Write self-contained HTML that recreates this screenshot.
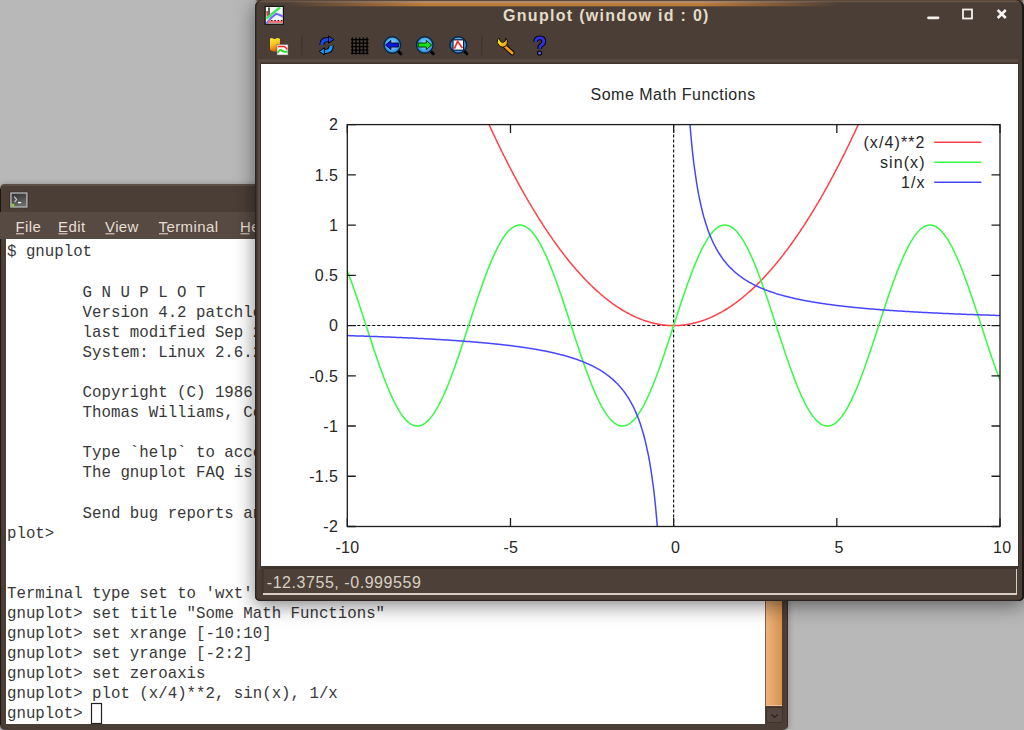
<!DOCTYPE html>
<html><head><meta charset="utf-8"><style>
*{box-sizing:border-box}
html,body{margin:0;padding:0}
body{width:1024px;height:730px;position:relative;overflow:hidden;background:#b8b8b8;font-family:"Liberation Sans",sans-serif}
.abs{position:absolute}
#term{left:0;top:183.6px;width:788.4px;height:546px;background:#4b3e36;border-radius:5px 5px 5px 5px;overflow:hidden;box-shadow:0 1px 6px rgba(0,0,0,.3)}
#tleft{left:0;top:5px;width:1.2px;height:536px;background:#1e1714}
#tright{left:786.6px;top:0;width:1.8px;height:545px;background:#3a2f29}
#tedge{left:0;top:0;width:788px;height:2px;background:#5e4f45}
#tmenu{left:0;top:28px;width:782px;height:27px;background:#574a42}
#tcontent{left:6px;top:55.6px;width:759.2px;height:485px;background:#fff}
#thumb{left:765.2px;top:55.6px;width:17.2px;height:467.2px;border-left:1px solid #8a6040;background:linear-gradient(#eab27c,#eab27c) 0 0/0 0 no-repeat,linear-gradient(90deg,#ebb47e,#d8924e)}
#thumbb{left:766px;top:521px;width:16.4px;height:1.8px;background:#f0c090}
#sbtn{left:765.6px;top:523.4px;width:17px;height:16.4px;background:#54463e;border:1px solid #3e332c;border-radius:1px 1px 3px 3px}
#gp{left:255.2px;top:0;width:768.8px;height:600.6px;background:#4b3e36;border-radius:7px 7px 5px 5px;box-shadow:0 4px 20px rgba(0,0,0,.5)}
#gpout{left:0;top:0;width:768.8px;height:600.6px;border-radius:7px 7px 5px 5px;box-shadow:inset 1.4px 0 0 #2c2420,inset -2px 0 0 #1e1814,inset 0 -1.2px 0 #2c2420}
#gptop{left:0;top:0;width:768.8px;height:8px;border-radius:7px 7px 0 0;background:linear-gradient(90deg,#4b3e36 4%,rgba(75,62,54,0) 22%,rgba(75,62,54,0) 58%,#4b3e36 76%),linear-gradient(#6a5038 0,#6a5038 1px,#c09a7a 1px,#b89070 2.8px,#c47e3c 3px,#b87838 5.5px,#4b3e36 7px)}
#gpedge{left:0;top:0;width:768.8px;height:3px;border-radius:7px 7px 0 0;background:linear-gradient(#5e4a3a 0,#5e4a3a 1px,rgba(140,112,90,.55) 1px,rgba(140,112,90,0) 3px)}
#gpband{left:2.8px;top:59.2px;width:760px;height:510px;border-top:3px solid #584a40;border-left:2.6px solid #584a40}
#gpwhite{left:5.8px;top:63.6px;width:756.9px;height:502.4px;background:#fff;box-shadow:0 0 0 0.6px #3a2f28}
#sdark{left:5.8px;top:566px;width:756.9px;height:3.4px;background:#3f342d}
#sleft{left:5.8px;top:566px;width:3px;height:28px;background:#43372f}
#status{left:8.8px;top:569.4px;width:751.6px;height:23.4px;background:#4d4038}
#statusline{left:8.2px;top:592.8px;width:753.9px;height:2px;background:#d8cdc2}
#statusr{left:760.4px;top:568.6px;width:1.7px;height:26.2px;background:#d8cdc2}
</style></head><body>
<div id="term" class="abs">
  <div id="tedge" class="abs"></div><div id="tleft" class="abs"></div><div id="tright" class="abs"></div>
  <div id="tmenu" class="abs"></div>
  <div id="tcontent" class="abs"></div>
  <div id="thumb" class="abs"></div>
  <div id="thumbb" class="abs"></div><div id="sbtn" class="abs"></div>
<svg class="abs" style="left:765.6px;top:523.4px" width="17" height="17"><path d="M5.6,7.6 L8.6,10.4 L11.6,7.6" stroke="#2a221e" stroke-width="1.4" fill="none"/></svg>
</div>
<svg class="abs" style="left:0;top:0" width="1024" height="730">
<g font-family="Liberation Mono" font-size="15.75" fill="#383838">
<text x="7.00" y="256.40">$ gnuplot</text>
<text x="82.60" y="296.58">G N U P L O T</text>
<text x="82.60" y="316.67">Version 4.2 patchlevel 2</text>
<text x="82.60" y="336.76">last modified Sep 2007</text>
<text x="82.60" y="356.85">System: Linux 2.6.24</text>
<text x="82.60" y="397.03">Copyright (C) 1986 - 199</text>
<text x="82.60" y="417.12">Thomas Williams, Colin K</text>
<text x="82.60" y="457.30">Type `help` to access th</text>
<text x="82.60" y="477.39">The gnuplot FAQ is avail</text>
<text x="82.60" y="517.57">Send bug reports and sug</text>
<text x="7.00" y="537.66">plot&gt;</text>
<text x="7.00" y="597.93">Terminal type set to &#x27;wxt&#x27;</text>
<text x="7.00" y="618.02">gnuplot&gt; set title &quot;Some Math Functions&quot;</text>
<text x="7.00" y="638.11">gnuplot&gt; set xrange [-10:10]</text>
<text x="7.00" y="658.20">gnuplot&gt; set yrange [-2:2]</text>
<text x="7.00" y="678.29">gnuplot&gt; set zeroaxis</text>
<text x="7.00" y="698.38">gnuplot&gt; plot (x/4)**2, sin(x), 1/x</text>
<text x="7.00" y="718.47">gnuplot&gt;</text>
</g>
<rect x="91.5" y="703.5" width="10" height="20" fill="none" stroke="#222" stroke-width="1.2"/>
<g font-family="Liberation Sans" font-size="15" fill="#e6ded4" letter-spacing="0.4">
<text x="15.5" y="231.7">File</text><text x="58" y="231.7">Edit</text><text x="105" y="231.7">View</text><text x="158.5" y="231.7">Terminal</text><text x="240" y="231.7">Help</text>
</g>
<g stroke="#e6ded4" stroke-width="1"><path d="M16,233.8h8 M58.5,233.8h9 M105.5,233.8h9 M159,233.8h9 M240.5,233.8h9"/></g>
<defs><linearGradient id="tig" x1="0" y1="0" x2="0.3" y2="1"><stop offset="0" stop-color="#2e2e2e"/><stop offset="1" stop-color="#6a6a6a"/></linearGradient></defs>
<rect x="9.6" y="191.8" width="18.6" height="16.4" fill="#2a2420"/>
<rect x="10.9" y="193" width="16" height="14" fill="url(#tig)" stroke="#b4b4b4" stroke-width="1.4"/>
<path d="M14.2,196.5 L16.6,199.6 L14.6,202.2" stroke="#c8c8c8" stroke-width="1.2" fill="none"/><path d="M18,202.6h3.2" stroke="#eee" stroke-width="1.4"/><rect x="11.3" y="203.8" width="3" height="2.8" fill="#8ad040"/>
</svg>
<div id="gp" class="abs">
  <div id="gptop" class="abs"></div><div id="gpedge" class="abs"></div>
  <div id="gpband" class="abs"></div><div id="gpwhite" class="abs"></div>
  <div id="sdark" class="abs"></div><div id="sleft" class="abs"></div><div id="status" class="abs"></div><div id="statusr" class="abs"></div>
  <div id="statusline" class="abs"></div><div id="gpout" class="abs"></div>
</div>
<svg class="abs" style="left:0;top:0" width="1024" height="730">
<text x="503" y="21.3" font-family="Liberation Sans" font-size="16" font-weight="bold" fill="#e4dcc8" letter-spacing="1.3">Gnuplot (window id : 0)</text>
<text x="266.8" y="587.8" font-family="Liberation Sans" font-size="16" fill="#d9d0c4" letter-spacing="0.55">-12.3755, -0.999559</text>
</svg>
<svg class="abs" style="left:0;top:0" width="1024" height="64">
<defs>
<linearGradient id="fold" x1="0" y1="0" x2="0.3" y2="1"><stop offset="0" stop-color="#fff23a"/><stop offset="0.55" stop-color="#f7c21a"/><stop offset="1" stop-color="#e5600e"/></linearGradient>
<radialGradient id="mag" cx="0.5" cy="0.45" r="0.55"><stop offset="0" stop-color="#b0e4ff"/><stop offset="0.6" stop-color="#50b0f0"/><stop offset="1" stop-color="#2878c8"/></radialGradient>
<linearGradient id="wr" x1="0" y1="0" x2="1" y2="1"><stop offset="0" stop-color="#f8f040"/><stop offset="0.45" stop-color="#f5d020"/><stop offset="1" stop-color="#f08a10"/></linearGradient>
</defs>
<!-- window icon -->
<rect x="264.5" y="5.8" width="19.5" height="19" fill="#141414"/>
<rect x="265.8" y="7" width="17" height="16.6" fill="#f6f4f4"/>
<path d="M269,7.5 V16" stroke="#2a2a2a" stroke-width="1.5"/>
<path d="M267,11 L267.5,16.5" stroke="#d84848" stroke-width="1.8"/>
<path d="M266.3,18.5 L280,7.5" stroke="#40e860" stroke-width="2.4"/>
<path d="M266.5,23.5 Q271,17 276,13.8 Q279,14.5 283,16.5" stroke="#6a6af8" stroke-width="2" fill="none"/>
<path d="M268,21.8 h15" stroke="#f06868" stroke-width="2.2"/>
<path d="M271,20.5 h12" stroke="#202020" stroke-width="1" stroke-dasharray="1.5,1.8"/>
<!-- open icon -->
<path d="M270,39 q1.5,-1.8 3,-0.5 q1.5,1 3,0 q2,-1.2 4,0.5 V50 q-2,1.5 -4.5,1.5 h-1 q-3,0 -4.5,-2 Z" fill="url(#fold)"/>
<rect x="277" y="44.5" width="11" height="10.5" fill="#fdfdfd" stroke="#6a6a6a" stroke-width="0.6"/>
<path d="M278,46.5 h5 q3,0 4,3" stroke="#f22" stroke-width="1.5" fill="none"/>
<path d="M278,53 q1.5,-4.5 3.5,-2.5 q2,1.8 6,1" stroke="#2d2" stroke-width="1.8" fill="none"/>
<path d="M301.8,35.5 V55.5" stroke="#3e322c" stroke-width="1.2"/>
<!-- refresh -->
<g fill="none">
<path d="M321.8,45 Q321.8,39.6 327.5,39.6 H329.5" stroke="#000" stroke-width="5"/>
<path d="M331.2,45.8 Q331.2,51.4 325.5,51.4 H323.5" stroke="#000" stroke-width="5"/>
<path d="M321.8,45 Q321.8,39.6 327.5,39.6 H329.5" stroke="#1c48e0" stroke-width="3.2"/>
<path d="M331.2,45.8 Q331.2,51.4 325.5,51.4 H323.5" stroke="#1e94f2" stroke-width="3.2"/>
</g>
<path d="M328.6,36 L333.8,39.6 L328.6,43.2 Z" fill="#1c48e0" stroke="#000" stroke-width="1"/>
<path d="M324.4,47.8 L319.2,51.4 L324.4,55 Z" fill="#1e94f2" stroke="#000" stroke-width="1"/>
<!-- grid -->
<g stroke="#000" stroke-width="1.4">
<path d="M352.4,37.5 V54.5 M356,37.5 V54.5 M359.7,37.5 V54.5 M363.4,37.5 V54.5 M367,37.5 V54.5"/>
<path d="M351,39.6 H368.5 M351,43.1 H368.5 M351,46.6 H368.5 M351,50.1 H368.5 M351,53.4 H368.5"/>
</g>
<!-- magnifiers -->
<g>
<path d="M397.5,50.5 L400.8,53.8" stroke="#000" stroke-width="3" stroke-linecap="round"/>
<circle cx="392.3" cy="45" r="8.3" fill="url(#mag)" stroke="#0a2440" stroke-width="1.4"/>
<path d="M385.6,45 L390.8,40.4 V43 H398.4 V47 H390.8 V49.6 Z" fill="#0818d8" stroke="#000030" stroke-width="0.9"/>
<path d="M430,50.5 L433.3,53.8" stroke="#000" stroke-width="3" stroke-linecap="round"/>
<circle cx="424.8" cy="45" r="8.3" fill="url(#mag)" stroke="#0a2440" stroke-width="1.4"/>
<path d="M431.5,45 L426.3,40.4 V43 H418.2 V47 H426.3 V49.6 Z" fill="#14e414" stroke="#002800" stroke-width="0.9"/>
<path d="M463.5,50.5 L466.8,53.8" stroke="#000" stroke-width="3" stroke-linecap="round"/>
<circle cx="458.3" cy="45" r="8.3" fill="url(#mag)" stroke="#0a2440" stroke-width="1.4"/>
<rect x="453" y="39.8" width="10.6" height="10.4" fill="#fafafa" stroke="#0c2040" stroke-width="1.2"/>
<path d="M454.4,48.6 L457.6,41.4 L462.4,48" stroke="#ee3030" stroke-width="1.7" fill="none"/>
</g>
<path d="M481.8,35.5 V55.5" stroke="#3e322c" stroke-width="1.2"/>
<!-- wrench -->
<path d="M504,45.5 L512.2,53" stroke="#000" stroke-width="4.6" stroke-linecap="round"/>
<path d="M504,45.5 L512.2,53" stroke="#f29a12" stroke-width="2.8" stroke-linecap="round"/>
<path d="M497.2,42.5 Q497,39.5 499.2,38 L500.3,41.2 L502.5,42.6 L505.2,41.2 L505.6,38 Q508.3,40.5 507.2,44 Q506,47.2 502.5,47.2 Q499,47 497.2,42.5 Z" fill="url(#wr)" stroke="#161000" stroke-width="1"/>
<!-- help -->
<path d="M535.6,42 Q535.6,37.8 539.8,37.8 Q543.8,37.8 543.8,41.4 Q543.8,43.6 541.2,45.1 Q539.6,46.1 539.6,48.8" stroke="#000" stroke-width="4.8" fill="none"/>
<path d="M535.6,42 Q535.6,37.8 539.8,37.8 Q543.8,37.8 543.8,41.4 Q543.8,43.6 541.2,45.1 Q539.6,46.1 539.6,48.8" stroke="#3030e0" stroke-width="2.8" fill="none"/>
<circle cx="539.6" cy="53" r="2.6" fill="#000"/>
<circle cx="539.6" cy="53" r="1.5" fill="#6060f0"/>
<!-- window buttons -->
<path d="M928.5,17.8 H938" stroke="#f4f0ea" stroke-width="2.8" stroke-linecap="round"/>
<rect x="963" y="9.5" width="9" height="9" fill="none" stroke="#f4f0ea" stroke-width="1.8"/>
<path d="M997.7,10 L1005.8,18 M1005.8,10 L997.7,18" stroke="#f8f6f2" stroke-width="2.5"/>
</svg>
<svg class="abs" style="left:0;top:0" width="1024" height="730">
<defs><clipPath id="pc"><rect x="347.30" y="124.60" width="652.70" height="401.90"/></clipPath></defs>
<g stroke="#000" stroke-width="1.1" stroke-dasharray="3,2" fill="none">
<line x1="347.30" y1="325.55" x2="1000.00" y2="325.55"/>
<line x1="673.65" y1="124.60" x2="673.65" y2="526.50"/>
</g>
<g clip-path="url(#pc)" fill="none" stroke-width="1.5" stroke-linejoin="round">
<path d="M347.3,-302.4 L348.1,-299.3 L348.9,-296.2 L349.7,-293.0 L350.6,-289.9 L351.4,-286.8 L352.2,-283.7 L353.0,-280.6 L353.8,-277.6 L354.6,-274.5 L355.5,-271.4 L356.3,-268.4 L357.1,-265.3 L357.9,-262.3 L358.7,-259.2 L359.5,-256.2 L360.4,-253.2 L361.2,-250.2 L362.0,-247.2 L362.8,-244.2 L363.6,-241.2 L364.4,-238.2 L365.2,-235.2 L366.1,-232.3 L366.9,-229.3 L367.7,-226.4 L368.5,-223.4 L369.3,-220.5 L370.1,-217.6 L371.0,-214.7 L371.8,-211.8 L372.6,-208.9 L373.4,-206.0 L374.2,-203.1 L375.0,-200.2 L375.9,-197.3 L376.7,-194.5 L377.5,-191.6 L378.3,-188.8 L379.1,-185.9 L379.9,-183.1 L380.8,-180.3 L381.6,-177.5 L382.4,-174.7 L383.2,-171.9 L384.0,-169.1 L384.8,-166.3 L385.6,-163.5 L386.5,-160.7 L387.3,-158.0 L388.1,-155.2 L388.9,-152.5 L389.7,-149.8 L390.5,-147.0 L391.4,-144.3 L392.2,-141.6 L393.0,-138.9 L393.8,-136.2 L394.6,-133.5 L395.4,-130.8 L396.3,-128.2 L397.1,-125.5 L397.9,-122.8 L398.7,-120.2 L399.5,-117.5 L400.3,-114.9 L401.1,-112.3 L402.0,-109.7 L402.8,-107.1 L403.6,-104.5 L404.4,-101.9 L405.2,-99.3 L406.0,-96.7 L406.9,-94.1 L407.7,-91.6 L408.5,-89.0 L409.3,-86.5 L410.1,-83.9 L410.9,-81.4 L411.8,-78.9 L412.6,-76.3 L413.4,-73.8 L414.2,-71.3 L415.0,-68.8 L415.8,-66.4 L416.6,-63.9 L417.5,-61.4 L418.3,-59.0 L419.1,-56.5 L419.9,-54.1 L420.7,-51.6 L421.5,-49.2 L422.4,-46.8 L423.2,-44.4 L424.0,-42.0 L424.8,-39.6 L425.6,-37.2 L426.4,-34.8 L427.3,-32.4 L428.1,-30.0 L428.9,-27.7 L429.7,-25.3 L430.5,-23.0 L431.3,-20.7 L432.2,-18.3 L433.0,-16.0 L433.8,-13.7 L434.6,-11.4 L435.4,-9.1 L436.2,-6.8 L437.0,-4.5 L437.9,-2.3 L438.7,0.0 L439.5,2.3 L440.3,4.5 L441.1,6.8 L441.9,9.0 L442.8,11.2 L443.6,13.4 L444.4,15.6 L445.2,17.8 L446.0,20.0 L446.8,22.2 L447.7,24.4 L448.5,26.6 L449.3,28.7 L450.1,30.9 L450.9,33.0 L451.7,35.2 L452.5,37.3 L453.4,39.4 L454.2,41.5 L455.0,43.7 L455.8,45.8 L456.6,47.8 L457.4,49.9 L458.3,52.0 L459.1,54.1 L459.9,56.1 L460.7,58.2 L461.5,60.2 L462.3,62.3 L463.2,64.3 L464.0,66.3 L464.8,68.3 L465.6,70.3 L466.4,72.3 L467.2,74.3 L468.0,76.3 L468.9,78.3 L469.7,80.2 L470.5,82.2 L471.3,84.2 L472.1,86.1 L472.9,88.0 L473.8,90.0 L474.6,91.9 L475.4,93.8 L476.2,95.7 L477.0,97.6 L477.8,99.5 L478.7,101.4 L479.5,103.2 L480.3,105.1 L481.1,107.0 L481.9,108.8 L482.7,110.6 L483.6,112.5 L484.4,114.3 L485.2,116.1 L486.0,117.9 L486.8,119.7 L487.6,121.5 L488.4,123.3 L489.3,125.1 L490.1,126.9 L490.9,128.6 L491.7,130.4 L492.5,132.1 L493.3,133.9 L494.2,135.6 L495.0,137.3 L495.8,139.0 L496.6,140.7 L497.4,142.4 L498.2,144.1 L499.1,145.8 L499.9,147.5 L500.7,149.2 L501.5,150.8 L502.3,152.5 L503.1,154.1 L503.9,155.7 L504.8,157.4 L505.6,159.0 L506.4,160.6 L507.2,162.2 L508.0,163.8 L508.8,165.4 L509.7,167.0 L510.5,168.6 L511.3,170.1 L512.1,171.7 L512.9,173.2 L513.7,174.8 L514.6,176.3 L515.4,177.8 L516.2,179.4 L517.0,180.9 L517.8,182.4 L518.6,183.9 L519.4,185.4 L520.3,186.8 L521.1,188.3 L521.9,189.8 L522.7,191.2 L523.5,192.7 L524.3,194.1 L525.2,195.5 L526.0,197.0 L526.8,198.4 L527.6,199.8 L528.4,201.2 L529.2,202.6 L530.1,204.0 L530.9,205.4 L531.7,206.7 L532.5,208.1 L533.3,209.4 L534.1,210.8 L535.0,212.1 L535.8,213.5 L536.6,214.8 L537.4,216.1 L538.2,217.4 L539.0,218.7 L539.8,220.0 L540.7,221.3 L541.5,222.5 L542.3,223.8 L543.1,225.1 L543.9,226.3 L544.7,227.6 L545.6,228.8 L546.4,230.0 L547.2,231.3 L548.0,232.5 L548.8,233.7 L549.6,234.9 L550.5,236.1 L551.3,237.2 L552.1,238.4 L552.9,239.6 L553.7,240.7 L554.5,241.9 L555.3,243.0 L556.2,244.2 L557.0,245.3 L557.8,246.4 L558.6,247.5 L559.4,248.6 L560.2,249.7 L561.1,250.8 L561.9,251.9 L562.7,253.0 L563.5,254.0 L564.3,255.1 L565.1,256.1 L566.0,257.2 L566.8,258.2 L567.6,259.2 L568.4,260.2 L569.2,261.2 L570.0,262.2 L570.8,263.2 L571.7,264.2 L572.5,265.2 L573.3,266.2 L574.1,267.1 L574.9,268.1 L575.7,269.0 L576.6,270.0 L577.4,270.9 L578.2,271.8 L579.0,272.7 L579.8,273.6 L580.6,274.5 L581.5,275.4 L582.3,276.3 L583.1,277.2 L583.9,278.1 L584.7,278.9 L585.5,279.8 L586.4,280.6 L587.2,281.5 L588.0,282.3 L588.8,283.1 L589.6,283.9 L590.4,284.7 L591.2,285.5 L592.1,286.3 L592.9,287.1 L593.7,287.9 L594.5,288.6 L595.3,289.4 L596.1,290.1 L597.0,290.9 L597.8,291.6 L598.6,292.3 L599.4,293.0 L600.2,293.8 L601.0,294.5 L601.9,295.2 L602.7,295.8 L603.5,296.5 L604.3,297.2 L605.1,297.9 L605.9,298.5 L606.7,299.2 L607.6,299.8 L608.4,300.4 L609.2,301.1 L610.0,301.7 L610.8,302.3 L611.6,302.9 L612.5,303.5 L613.3,304.1 L614.1,304.6 L614.9,305.2 L615.7,305.8 L616.5,306.3 L617.4,306.9 L618.2,307.4 L619.0,307.9 L619.8,308.5 L620.6,309.0 L621.4,309.5 L622.2,310.0 L623.1,310.5 L623.9,310.9 L624.7,311.4 L625.5,311.9 L626.3,312.3 L627.1,312.8 L628.0,313.2 L628.8,313.7 L629.6,314.1 L630.4,314.5 L631.2,314.9 L632.0,315.3 L632.9,315.7 L633.7,316.1 L634.5,316.5 L635.3,316.9 L636.1,317.2 L636.9,317.6 L637.8,318.0 L638.6,318.3 L639.4,318.6 L640.2,319.0 L641.0,319.3 L641.8,319.6 L642.6,319.9 L643.5,320.2 L644.3,320.5 L645.1,320.7 L645.9,321.0 L646.7,321.3 L647.5,321.5 L648.4,321.8 L649.2,322.0 L650.0,322.2 L650.8,322.5 L651.6,322.7 L652.4,322.9 L653.3,323.1 L654.1,323.3 L654.9,323.5 L655.7,323.7 L656.5,323.8 L657.3,324.0 L658.1,324.1 L659.0,324.3 L659.8,324.4 L660.6,324.5 L661.4,324.7 L662.2,324.8 L663.0,324.9 L663.9,325.0 L664.7,325.1 L665.5,325.2 L666.3,325.2 L667.1,325.3 L667.9,325.4 L668.8,325.4 L669.6,325.5 L670.4,325.5 L671.2,325.5 L672.0,325.5 L672.8,325.5 L673.7,325.6 L674.5,325.5 L675.3,325.5 L676.1,325.5 L676.9,325.5 L677.7,325.5 L678.5,325.4 L679.4,325.4 L680.2,325.3 L681.0,325.2 L681.8,325.2 L682.6,325.1 L683.4,325.0 L684.3,324.9 L685.1,324.8 L685.9,324.7 L686.7,324.5 L687.5,324.4 L688.3,324.3 L689.2,324.1 L690.0,324.0 L690.8,323.8 L691.6,323.7 L692.4,323.5 L693.2,323.3 L694.0,323.1 L694.9,322.9 L695.7,322.7 L696.5,322.5 L697.3,322.2 L698.1,322.0 L698.9,321.8 L699.8,321.5 L700.6,321.3 L701.4,321.0 L702.2,320.7 L703.0,320.5 L703.8,320.2 L704.7,319.9 L705.5,319.6 L706.3,319.3 L707.1,319.0 L707.9,318.6 L708.7,318.3 L709.5,318.0 L710.4,317.6 L711.2,317.2 L712.0,316.9 L712.8,316.5 L713.6,316.1 L714.4,315.7 L715.3,315.3 L716.1,314.9 L716.9,314.5 L717.7,314.1 L718.5,313.7 L719.3,313.2 L720.2,312.8 L721.0,312.3 L721.8,311.9 L722.6,311.4 L723.4,310.9 L724.2,310.5 L725.1,310.0 L725.9,309.5 L726.7,309.0 L727.5,308.5 L728.3,307.9 L729.1,307.4 L729.9,306.9 L730.8,306.3 L731.6,305.8 L732.4,305.2 L733.2,304.6 L734.0,304.1 L734.8,303.5 L735.7,302.9 L736.5,302.3 L737.3,301.7 L738.1,301.1 L738.9,300.4 L739.7,299.8 L740.6,299.2 L741.4,298.5 L742.2,297.9 L743.0,297.2 L743.8,296.5 L744.6,295.8 L745.4,295.2 L746.3,294.5 L747.1,293.8 L747.9,293.0 L748.7,292.3 L749.5,291.6 L750.3,290.9 L751.2,290.1 L752.0,289.4 L752.8,288.6 L753.6,287.9 L754.4,287.1 L755.2,286.3 L756.1,285.5 L756.9,284.7 L757.7,283.9 L758.5,283.1 L759.3,282.3 L760.1,281.5 L760.9,280.6 L761.8,279.8 L762.6,278.9 L763.4,278.1 L764.2,277.2 L765.0,276.3 L765.8,275.4 L766.7,274.5 L767.5,273.6 L768.3,272.7 L769.1,271.8 L769.9,270.9 L770.7,270.0 L771.6,269.0 L772.4,268.1 L773.2,267.1 L774.0,266.2 L774.8,265.2 L775.6,264.2 L776.5,263.2 L777.3,262.2 L778.1,261.2 L778.9,260.2 L779.7,259.2 L780.5,258.2 L781.3,257.2 L782.2,256.1 L783.0,255.1 L783.8,254.0 L784.6,253.0 L785.4,251.9 L786.2,250.8 L787.1,249.7 L787.9,248.6 L788.7,247.5 L789.5,246.4 L790.3,245.3 L791.1,244.2 L792.0,243.0 L792.8,241.9 L793.6,240.7 L794.4,239.6 L795.2,238.4 L796.0,237.2 L796.8,236.1 L797.7,234.9 L798.5,233.7 L799.3,232.5 L800.1,231.3 L800.9,230.0 L801.7,228.8 L802.6,227.6 L803.4,226.3 L804.2,225.1 L805.0,223.8 L805.8,222.5 L806.6,221.3 L807.5,220.0 L808.3,218.7 L809.1,217.4 L809.9,216.1 L810.7,214.8 L811.5,213.5 L812.3,212.1 L813.2,210.8 L814.0,209.4 L814.8,208.1 L815.6,206.7 L816.4,205.4 L817.2,204.0 L818.1,202.6 L818.9,201.2 L819.7,199.8 L820.5,198.4 L821.3,197.0 L822.1,195.5 L823.0,194.1 L823.8,192.7 L824.6,191.2 L825.4,189.8 L826.2,188.3 L827.0,186.8 L827.9,185.4 L828.7,183.9 L829.5,182.4 L830.3,180.9 L831.1,179.4 L831.9,177.8 L832.7,176.3 L833.6,174.8 L834.4,173.2 L835.2,171.7 L836.0,170.1 L836.8,168.6 L837.6,167.0 L838.5,165.4 L839.3,163.8 L840.1,162.2 L840.9,160.6 L841.7,159.0 L842.5,157.4 L843.4,155.7 L844.2,154.1 L845.0,152.5 L845.8,150.8 L846.6,149.2 L847.4,147.5 L848.2,145.8 L849.1,144.1 L849.9,142.4 L850.7,140.7 L851.5,139.0 L852.3,137.3 L853.1,135.6 L854.0,133.9 L854.8,132.1 L855.6,130.4 L856.4,128.6 L857.2,126.9 L858.0,125.1 L858.9,123.3 L859.7,121.5 L860.5,119.7 L861.3,117.9 L862.1,116.1 L862.9,114.3 L863.7,112.5 L864.6,110.6 L865.4,108.8 L866.2,107.0 L867.0,105.1 L867.8,103.2 L868.6,101.4 L869.5,99.5 L870.3,97.6 L871.1,95.7 L871.9,93.8 L872.7,91.9 L873.5,90.0 L874.4,88.0 L875.2,86.1 L876.0,84.2 L876.8,82.2 L877.6,80.2 L878.4,78.3 L879.3,76.3 L880.1,74.3 L880.9,72.3 L881.7,70.3 L882.5,68.3 L883.3,66.3 L884.1,64.3 L885.0,62.3 L885.8,60.2 L886.6,58.2 L887.4,56.1 L888.2,54.1 L889.0,52.0 L889.9,49.9 L890.7,47.8 L891.5,45.8 L892.3,43.7 L893.1,41.5 L893.9,39.4 L894.8,37.3 L895.6,35.2 L896.4,33.0 L897.2,30.9 L898.0,28.7 L898.8,26.6 L899.6,24.4 L900.5,22.2 L901.3,20.0 L902.1,17.8 L902.9,15.6 L903.7,13.4 L904.5,11.2 L905.4,9.0 L906.2,6.8 L907.0,4.5 L907.8,2.3 L908.6,0.0 L909.4,-2.3 L910.3,-4.5 L911.1,-6.8 L911.9,-9.1 L912.7,-11.4 L913.5,-13.7 L914.3,-16.0 L915.1,-18.3 L916.0,-20.7 L916.8,-23.0 L917.6,-25.3 L918.4,-27.7 L919.2,-30.0 L920.0,-32.4 L920.9,-34.8 L921.7,-37.2 L922.5,-39.6 L923.3,-42.0 L924.1,-44.4 L924.9,-46.8 L925.8,-49.2 L926.6,-51.6 L927.4,-54.1 L928.2,-56.5 L929.0,-59.0 L929.8,-61.4 L930.7,-63.9 L931.5,-66.4 L932.3,-68.8 L933.1,-71.3 L933.9,-73.8 L934.7,-76.3 L935.5,-78.9 L936.4,-81.4 L937.2,-83.9 L938.0,-86.5 L938.8,-89.0 L939.6,-91.6 L940.4,-94.1 L941.3,-96.7 L942.1,-99.3 L942.9,-101.9 L943.7,-104.5 L944.5,-107.1 L945.3,-109.7 L946.2,-112.3 L947.0,-114.9 L947.8,-117.5 L948.6,-120.2 L949.4,-122.8 L950.2,-125.5 L951.0,-128.2 L951.9,-130.8 L952.7,-133.5 L953.5,-136.2 L954.3,-138.9 L955.1,-141.6 L955.9,-144.3 L956.8,-147.0 L957.6,-149.8 L958.4,-152.5 L959.2,-155.2 L960.0,-158.0 L960.8,-160.7 L961.7,-163.5 L962.5,-166.3 L963.3,-169.1 L964.1,-171.9 L964.9,-174.7 L965.7,-177.5 L966.5,-180.3 L967.4,-183.1 L968.2,-185.9 L969.0,-188.8 L969.8,-191.6 L970.6,-194.5 L971.4,-197.3 L972.3,-200.2 L973.1,-203.1 L973.9,-206.0 L974.7,-208.9 L975.5,-211.8 L976.3,-214.7 L977.2,-217.6 L978.0,-220.5 L978.8,-223.4 L979.6,-226.4 L980.4,-229.3 L981.2,-232.3 L982.1,-235.2 L982.9,-238.2 L983.7,-241.2 L984.5,-244.2 L985.3,-247.2 L986.1,-250.2 L986.9,-253.2 L987.8,-256.2 L988.6,-259.2 L989.4,-262.3 L990.2,-265.3 L991.0,-268.4 L991.8,-271.4 L992.7,-274.5 L993.5,-277.6 L994.3,-280.6 L995.1,-283.7 L995.9,-286.8 L996.7,-289.9 L997.6,-293.0 L998.4,-296.2 L999.2,-299.3 L1000.0,-302.4" stroke="#ff4048"/>
<path d="M347.3,270.9 L348.1,273.0 L348.9,275.2 L349.7,277.4 L350.6,279.6 L351.4,281.8 L352.2,284.1 L353.0,286.4 L353.8,288.7 L354.6,291.1 L355.5,293.4 L356.3,295.8 L357.1,298.2 L357.9,300.7 L358.7,303.1 L359.5,305.6 L360.4,308.0 L361.2,310.5 L362.0,313.0 L362.8,315.5 L363.6,318.0 L364.4,320.5 L365.2,323.0 L366.1,325.5 L366.9,328.0 L367.7,330.5 L368.5,333.1 L369.3,335.6 L370.1,338.1 L371.0,340.5 L371.8,343.0 L372.6,345.5 L373.4,347.9 L374.2,350.4 L375.0,352.8 L375.9,355.2 L376.7,357.6 L377.5,360.0 L378.3,362.3 L379.1,364.7 L379.9,367.0 L380.8,369.2 L381.6,371.5 L382.4,373.7 L383.2,375.9 L384.0,378.0 L384.8,380.2 L385.6,382.3 L386.5,384.3 L387.3,386.3 L388.1,388.3 L388.9,390.3 L389.7,392.2 L390.5,394.0 L391.4,395.8 L392.2,397.6 L393.0,399.3 L393.8,401.0 L394.6,402.7 L395.4,404.2 L396.3,405.8 L397.1,407.3 L397.9,408.7 L398.7,410.1 L399.5,411.4 L400.3,412.7 L401.1,413.9 L402.0,415.1 L402.8,416.2 L403.6,417.3 L404.4,418.2 L405.2,419.2 L406.0,420.1 L406.9,420.9 L407.7,421.7 L408.5,422.4 L409.3,423.0 L410.1,423.6 L410.9,424.1 L411.8,424.6 L412.6,425.0 L413.4,425.3 L414.2,425.6 L415.0,425.8 L415.8,425.9 L416.6,426.0 L417.5,426.0 L418.3,426.0 L419.1,425.9 L419.9,425.7 L420.7,425.5 L421.5,425.2 L422.4,424.8 L423.2,424.4 L424.0,423.9 L424.8,423.4 L425.6,422.8 L426.4,422.1 L427.3,421.4 L428.1,420.6 L428.9,419.8 L429.7,418.9 L430.5,417.9 L431.3,416.9 L432.2,415.8 L433.0,414.7 L433.8,413.5 L434.6,412.3 L435.4,411.0 L436.2,409.6 L437.0,408.2 L437.9,406.8 L438.7,405.3 L439.5,403.7 L440.3,402.1 L441.1,400.5 L441.9,398.8 L442.8,397.1 L443.6,395.3 L444.4,393.4 L445.2,391.6 L446.0,389.6 L446.8,387.7 L447.7,385.7 L448.5,383.7 L449.3,381.6 L450.1,379.5 L450.9,377.4 L451.7,375.2 L452.5,373.0 L453.4,370.8 L454.2,368.5 L455.0,366.2 L455.8,363.9 L456.6,361.6 L457.4,359.2 L458.3,356.9 L459.1,354.5 L459.9,352.0 L460.7,349.6 L461.5,347.2 L462.3,344.7 L463.2,342.2 L464.0,339.8 L464.8,337.3 L465.6,334.8 L466.4,332.3 L467.2,329.8 L468.0,327.2 L468.9,324.7 L469.7,322.2 L470.5,319.7 L471.3,317.2 L472.1,314.7 L472.9,312.2 L473.8,309.7 L474.6,307.2 L475.4,304.8 L476.2,302.3 L477.0,299.9 L477.8,297.5 L478.7,295.1 L479.5,292.7 L480.3,290.3 L481.1,288.0 L481.9,285.7 L482.7,283.4 L483.6,281.1 L484.4,278.9 L485.2,276.7 L486.0,274.5 L486.8,272.3 L487.6,270.2 L488.4,268.1 L489.3,266.1 L490.1,264.1 L490.9,262.1 L491.7,260.2 L492.5,258.3 L493.3,256.5 L494.2,254.7 L495.0,252.9 L495.8,251.2 L496.6,249.5 L497.4,247.9 L498.2,246.3 L499.1,244.8 L499.9,243.3 L500.7,241.9 L501.5,240.6 L502.3,239.2 L503.1,238.0 L503.9,236.8 L504.8,235.6 L505.6,234.5 L506.4,233.5 L507.2,232.5 L508.0,231.6 L508.8,230.7 L509.7,229.9 L510.5,229.2 L511.3,228.5 L512.1,227.9 L512.9,227.3 L513.7,226.8 L514.6,226.4 L515.4,226.0 L516.2,225.7 L517.0,225.5 L517.8,225.3 L518.6,225.1 L519.4,225.1 L520.3,225.1 L521.1,225.1 L521.9,225.3 L522.7,225.5 L523.5,225.7 L524.3,226.0 L525.2,226.4 L526.0,226.8 L526.8,227.3 L527.6,227.9 L528.4,228.5 L529.2,229.2 L530.1,229.9 L530.9,230.7 L531.7,231.6 L532.5,232.5 L533.3,233.5 L534.1,234.5 L535.0,235.6 L535.8,236.8 L536.6,238.0 L537.4,239.2 L538.2,240.5 L539.0,241.9 L539.8,243.3 L540.7,244.8 L541.5,246.3 L542.3,247.9 L543.1,249.5 L543.9,251.2 L544.7,252.9 L545.6,254.6 L546.4,256.4 L547.2,258.3 L548.0,260.2 L548.8,262.1 L549.6,264.1 L550.5,266.1 L551.3,268.1 L552.1,270.2 L552.9,272.3 L553.7,274.5 L554.5,276.6 L555.3,278.8 L556.2,281.1 L557.0,283.4 L557.8,285.6 L558.6,288.0 L559.4,290.3 L560.2,292.7 L561.1,295.1 L561.9,297.5 L562.7,299.9 L563.5,302.3 L564.3,304.8 L565.1,307.2 L566.0,309.7 L566.8,312.2 L567.6,314.7 L568.4,317.2 L569.2,319.7 L570.0,322.2 L570.8,324.7 L571.7,327.2 L572.5,329.7 L573.3,332.2 L574.1,334.7 L574.9,337.2 L575.7,339.7 L576.6,342.2 L577.4,344.7 L578.2,347.1 L579.0,349.6 L579.8,352.0 L580.6,354.4 L581.5,356.8 L582.3,359.2 L583.1,361.6 L583.9,363.9 L584.7,366.2 L585.5,368.5 L586.4,370.7 L587.2,373.0 L588.0,375.2 L588.8,377.3 L589.6,379.5 L590.4,381.6 L591.2,383.7 L592.1,385.7 L592.9,387.7 L593.7,389.6 L594.5,391.5 L595.3,393.4 L596.1,395.2 L597.0,397.0 L597.8,398.8 L598.6,400.5 L599.4,402.1 L600.2,403.7 L601.0,405.3 L601.9,406.8 L602.7,408.2 L603.5,409.6 L604.3,411.0 L605.1,412.3 L605.9,413.5 L606.7,414.7 L607.6,415.8 L608.4,416.9 L609.2,417.9 L610.0,418.9 L610.8,419.8 L611.6,420.6 L612.5,421.4 L613.3,422.1 L614.1,422.8 L614.9,423.4 L615.7,423.9 L616.5,424.4 L617.4,424.8 L618.2,425.2 L619.0,425.5 L619.8,425.7 L620.6,425.9 L621.4,426.0 L622.2,426.0 L623.1,426.0 L623.9,425.9 L624.7,425.8 L625.5,425.6 L626.3,425.3 L627.1,425.0 L628.0,424.6 L628.8,424.1 L629.6,423.6 L630.4,423.0 L631.2,422.4 L632.0,421.7 L632.9,420.9 L633.7,420.1 L634.5,419.2 L635.3,418.3 L636.1,417.3 L636.9,416.2 L637.8,415.1 L638.6,413.9 L639.4,412.7 L640.2,411.4 L641.0,410.1 L641.8,408.7 L642.6,407.3 L643.5,405.8 L644.3,404.3 L645.1,402.7 L645.9,401.0 L646.7,399.4 L647.5,397.6 L648.4,395.9 L649.2,394.0 L650.0,392.2 L650.8,390.3 L651.6,388.3 L652.4,386.4 L653.3,384.3 L654.1,382.3 L654.9,380.2 L655.7,378.1 L656.5,375.9 L657.3,373.7 L658.1,371.5 L659.0,369.3 L659.8,367.0 L660.6,364.7 L661.4,362.4 L662.2,360.0 L663.0,357.6 L663.9,355.2 L664.7,352.8 L665.5,350.4 L666.3,348.0 L667.1,345.5 L667.9,343.0 L668.8,340.6 L669.6,338.1 L670.4,335.6 L671.2,333.1 L672.0,330.6 L672.8,328.1 L673.7,325.6 L674.5,323.0 L675.3,320.5 L676.1,318.0 L676.9,315.5 L677.7,313.0 L678.5,310.5 L679.4,308.1 L680.2,305.6 L681.0,303.1 L681.8,300.7 L682.6,298.3 L683.4,295.9 L684.3,293.5 L685.1,291.1 L685.9,288.7 L686.7,286.4 L687.5,284.1 L688.3,281.8 L689.2,279.6 L690.0,277.4 L690.8,275.2 L691.6,273.0 L692.4,270.9 L693.2,268.8 L694.0,266.8 L694.9,264.7 L695.7,262.8 L696.5,260.8 L697.3,258.9 L698.1,257.1 L698.9,255.2 L699.8,253.5 L700.6,251.7 L701.4,250.1 L702.2,248.4 L703.0,246.8 L703.8,245.3 L704.7,243.8 L705.5,242.4 L706.3,241.0 L707.1,239.7 L707.9,238.4 L708.7,237.2 L709.5,236.0 L710.4,234.9 L711.2,233.8 L712.0,232.8 L712.8,231.9 L713.6,231.0 L714.4,230.2 L715.3,229.4 L716.1,228.7 L716.9,228.1 L717.7,227.5 L718.5,227.0 L719.3,226.5 L720.2,226.1 L721.0,225.8 L721.8,225.5 L722.6,225.3 L723.4,225.2 L724.2,225.1 L725.1,225.1 L725.9,225.1 L726.7,225.2 L727.5,225.4 L728.3,225.6 L729.1,225.9 L729.9,226.3 L730.8,226.7 L731.6,227.2 L732.4,227.7 L733.2,228.3 L734.0,229.0 L734.8,229.7 L735.7,230.5 L736.5,231.3 L737.3,232.2 L738.1,233.2 L738.9,234.2 L739.7,235.3 L740.6,236.4 L741.4,237.6 L742.2,238.8 L743.0,240.1 L743.8,241.5 L744.6,242.9 L745.4,244.3 L746.3,245.8 L747.1,247.4 L747.9,249.0 L748.7,250.6 L749.5,252.3 L750.3,254.1 L751.2,255.9 L752.0,257.7 L752.8,259.6 L753.6,261.5 L754.4,263.4 L755.2,265.4 L756.1,267.4 L756.9,269.5 L757.7,271.6 L758.5,273.8 L759.3,275.9 L760.1,278.1 L760.9,280.4 L761.8,282.6 L762.6,284.9 L763.4,287.2 L764.2,289.5 L765.0,291.9 L765.8,294.3 L766.7,296.7 L767.5,299.1 L768.3,301.5 L769.1,304.0 L769.9,306.4 L770.7,308.9 L771.6,311.4 L772.4,313.9 L773.2,316.4 L774.0,318.9 L774.8,321.4 L775.6,323.9 L776.5,326.4 L777.3,328.9 L778.1,331.4 L778.9,333.9 L779.7,336.4 L780.5,338.9 L781.3,341.4 L782.2,343.9 L783.0,346.3 L783.8,348.8 L784.6,351.2 L785.4,353.6 L786.2,356.0 L787.1,358.4 L787.9,360.8 L788.7,363.1 L789.5,365.5 L790.3,367.7 L791.1,370.0 L792.0,372.3 L792.8,374.5 L793.6,376.6 L794.4,378.8 L795.2,380.9 L796.0,383.0 L796.8,385.0 L797.7,387.0 L798.5,389.0 L799.3,390.9 L800.1,392.8 L800.9,394.7 L801.7,396.5 L802.6,398.2 L803.4,399.9 L804.2,401.6 L805.0,403.2 L805.8,404.8 L806.6,406.3 L807.5,407.8 L808.3,409.2 L809.1,410.6 L809.9,411.9 L810.7,413.1 L811.5,414.3 L812.3,415.5 L813.2,416.6 L814.0,417.6 L814.8,418.6 L815.6,419.5 L816.4,420.4 L817.2,421.2 L818.1,421.9 L818.9,422.6 L819.7,423.2 L820.5,423.8 L821.3,424.3 L822.1,424.7 L823.0,425.1 L823.8,425.4 L824.6,425.6 L825.4,425.8 L826.2,426.0 L827.0,426.0 L827.9,426.0 L828.7,426.0 L829.5,425.8 L830.3,425.6 L831.1,425.4 L831.9,425.1 L832.7,424.7 L833.6,424.3 L834.4,423.8 L835.2,423.2 L836.0,422.6 L836.8,421.9 L837.6,421.2 L838.5,420.4 L839.3,419.5 L840.1,418.6 L840.9,417.6 L841.7,416.6 L842.5,415.5 L843.4,414.3 L844.2,413.1 L845.0,411.9 L845.8,410.5 L846.6,409.2 L847.4,407.8 L848.2,406.3 L849.1,404.8 L849.9,403.2 L850.7,401.6 L851.5,399.9 L852.3,398.2 L853.1,396.4 L854.0,394.6 L854.8,392.8 L855.6,390.9 L856.4,389.0 L857.2,387.0 L858.0,385.0 L858.9,383.0 L859.7,380.9 L860.5,378.8 L861.3,376.6 L862.1,374.4 L862.9,372.2 L863.7,370.0 L864.6,367.7 L865.4,365.4 L866.2,363.1 L867.0,360.8 L867.8,358.4 L868.6,356.0 L869.5,353.6 L870.3,351.2 L871.1,348.8 L871.9,346.3 L872.7,343.9 L873.5,341.4 L874.4,338.9 L875.2,336.4 L876.0,333.9 L876.8,331.4 L877.6,328.9 L878.4,326.4 L879.3,323.9 L880.1,321.3 L880.9,318.8 L881.7,316.3 L882.5,313.8 L883.3,311.3 L884.1,308.9 L885.0,306.4 L885.8,303.9 L886.6,301.5 L887.4,299.1 L888.2,296.6 L889.0,294.2 L889.9,291.9 L890.7,289.5 L891.5,287.2 L892.3,284.9 L893.1,282.6 L893.9,280.3 L894.8,278.1 L895.6,275.9 L896.4,273.7 L897.2,271.6 L898.0,269.5 L898.8,267.4 L899.6,265.4 L900.5,263.4 L901.3,261.5 L902.1,259.5 L902.9,257.7 L903.7,255.8 L904.5,254.0 L905.4,252.3 L906.2,250.6 L907.0,249.0 L907.8,247.4 L908.6,245.8 L909.4,244.3 L910.3,242.9 L911.1,241.5 L911.9,240.1 L912.7,238.8 L913.5,237.6 L914.3,236.4 L915.1,235.3 L916.0,234.2 L916.8,233.2 L917.6,232.2 L918.4,231.3 L919.2,230.5 L920.0,229.7 L920.9,229.0 L921.7,228.3 L922.5,227.7 L923.3,227.2 L924.1,226.7 L924.9,226.3 L925.8,225.9 L926.6,225.6 L927.4,225.4 L928.2,225.2 L929.0,225.1 L929.8,225.1 L930.7,225.1 L931.5,225.2 L932.3,225.3 L933.1,225.5 L933.9,225.8 L934.7,226.1 L935.5,226.5 L936.4,227.0 L937.2,227.5 L938.0,228.1 L938.8,228.7 L939.6,229.4 L940.4,230.2 L941.3,231.0 L942.1,231.9 L942.9,232.9 L943.7,233.8 L944.5,234.9 L945.3,236.0 L946.2,237.2 L947.0,238.4 L947.8,239.7 L948.6,241.0 L949.4,242.4 L950.2,243.8 L951.0,245.3 L951.9,246.9 L952.7,248.4 L953.5,250.1 L954.3,251.8 L955.1,253.5 L955.9,255.3 L956.8,257.1 L957.6,258.9 L958.4,260.8 L959.2,262.8 L960.0,264.8 L960.8,266.8 L961.7,268.8 L962.5,270.9 L963.3,273.1 L964.1,275.2 L964.9,277.4 L965.7,279.6 L966.5,281.9 L967.4,284.1 L968.2,286.4 L969.0,288.8 L969.8,291.1 L970.6,293.5 L971.4,295.9 L972.3,298.3 L973.1,300.7 L973.9,303.2 L974.7,305.6 L975.5,308.1 L976.3,310.6 L977.2,313.0 L978.0,315.5 L978.8,318.0 L979.6,320.6 L980.4,323.1 L981.2,325.6 L982.1,328.1 L982.9,330.6 L983.7,333.1 L984.5,335.6 L985.3,338.1 L986.1,340.6 L986.9,343.1 L987.8,345.5 L988.6,348.0 L989.4,350.4 L990.2,352.9 L991.0,355.3 L991.8,357.7 L992.7,360.0 L993.5,362.4 L994.3,364.7 L995.1,367.0 L995.9,369.3 L996.7,371.5 L997.6,373.7 L998.4,375.9 L999.2,378.1 L1000.0,380.2" stroke="#34fa44"/>
<path d="M347.3,335.6 L348.1,335.6 L348.9,335.6 L349.7,335.7 L350.6,335.7 L351.4,335.7 L352.2,335.8 L353.0,335.8 L353.8,335.8 L354.6,335.8 L355.5,335.9 L356.3,335.9 L357.1,335.9 L357.9,335.9 L358.7,336.0 L359.5,336.0 L360.4,336.0 L361.2,336.0 L362.0,336.1 L362.8,336.1 L363.6,336.1 L364.4,336.2 L365.2,336.2 L366.1,336.2 L366.9,336.2 L367.7,336.3 L368.5,336.3 L369.3,336.3 L370.1,336.4 L371.0,336.4 L371.8,336.4 L372.6,336.4 L373.4,336.5 L374.2,336.5 L375.0,336.5 L375.9,336.6 L376.7,336.6 L377.5,336.6 L378.3,336.7 L379.1,336.7 L379.9,336.7 L380.8,336.7 L381.6,336.8 L382.4,336.8 L383.2,336.8 L384.0,336.9 L384.8,336.9 L385.6,336.9 L386.5,337.0 L387.3,337.0 L388.1,337.0 L388.9,337.1 L389.7,337.1 L390.5,337.1 L391.4,337.2 L392.2,337.2 L393.0,337.2 L393.8,337.3 L394.6,337.3 L395.4,337.3 L396.3,337.4 L397.1,337.4 L397.9,337.4 L398.7,337.5 L399.5,337.5 L400.3,337.5 L401.1,337.6 L402.0,337.6 L402.8,337.7 L403.6,337.7 L404.4,337.7 L405.2,337.8 L406.0,337.8 L406.9,337.8 L407.7,337.9 L408.5,337.9 L409.3,338.0 L410.1,338.0 L410.9,338.0 L411.8,338.1 L412.6,338.1 L413.4,338.1 L414.2,338.2 L415.0,338.2 L415.8,338.3 L416.6,338.3 L417.5,338.3 L418.3,338.4 L419.1,338.4 L419.9,338.5 L420.7,338.5 L421.5,338.6 L422.4,338.6 L423.2,338.6 L424.0,338.7 L424.8,338.7 L425.6,338.8 L426.4,338.8 L427.3,338.9 L428.1,338.9 L428.9,338.9 L429.7,339.0 L430.5,339.0 L431.3,339.1 L432.2,339.1 L433.0,339.2 L433.8,339.2 L434.6,339.3 L435.4,339.3 L436.2,339.4 L437.0,339.4 L437.9,339.5 L438.7,339.5 L439.5,339.6 L440.3,339.6 L441.1,339.7 L441.9,339.7 L442.8,339.8 L443.6,339.8 L444.4,339.9 L445.2,339.9 L446.0,340.0 L446.8,340.0 L447.7,340.1 L448.5,340.1 L449.3,340.2 L450.1,340.2 L450.9,340.3 L451.7,340.3 L452.5,340.4 L453.4,340.4 L454.2,340.5 L455.0,340.5 L455.8,340.6 L456.6,340.7 L457.4,340.7 L458.3,340.8 L459.1,340.8 L459.9,340.9 L460.7,340.9 L461.5,341.0 L462.3,341.1 L463.2,341.1 L464.0,341.2 L464.8,341.2 L465.6,341.3 L466.4,341.4 L467.2,341.4 L468.0,341.5 L468.9,341.6 L469.7,341.6 L470.5,341.7 L471.3,341.8 L472.1,341.8 L472.9,341.9 L473.8,342.0 L474.6,342.0 L475.4,342.1 L476.2,342.2 L477.0,342.2 L477.8,342.3 L478.7,342.4 L479.5,342.4 L480.3,342.5 L481.1,342.6 L481.9,342.7 L482.7,342.7 L483.6,342.8 L484.4,342.9 L485.2,342.9 L486.0,343.0 L486.8,343.1 L487.6,343.2 L488.4,343.3 L489.3,343.3 L490.1,343.4 L490.9,343.5 L491.7,343.6 L492.5,343.7 L493.3,343.7 L494.2,343.8 L495.0,343.9 L495.8,344.0 L496.6,344.1 L497.4,344.2 L498.2,344.2 L499.1,344.3 L499.9,344.4 L500.7,344.5 L501.5,344.6 L502.3,344.7 L503.1,344.8 L503.9,344.9 L504.8,345.0 L505.6,345.1 L506.4,345.2 L507.2,345.3 L508.0,345.3 L508.8,345.4 L509.7,345.5 L510.5,345.6 L511.3,345.7 L512.1,345.8 L512.9,346.0 L513.7,346.1 L514.6,346.2 L515.4,346.3 L516.2,346.4 L517.0,346.5 L517.8,346.6 L518.6,346.7 L519.4,346.8 L520.3,346.9 L521.1,347.0 L521.9,347.2 L522.7,347.3 L523.5,347.4 L524.3,347.5 L525.2,347.6 L526.0,347.8 L526.8,347.9 L527.6,348.0 L528.4,348.1 L529.2,348.3 L530.1,348.4 L530.9,348.5 L531.7,348.6 L532.5,348.8 L533.3,348.9 L534.1,349.1 L535.0,349.2 L535.8,349.3 L536.6,349.5 L537.4,349.6 L538.2,349.8 L539.0,349.9 L539.8,350.1 L540.7,350.2 L541.5,350.4 L542.3,350.5 L543.1,350.7 L543.9,350.8 L544.7,351.0 L545.6,351.1 L546.4,351.3 L547.2,351.5 L548.0,351.6 L548.8,351.8 L549.6,352.0 L550.5,352.2 L551.3,352.3 L552.1,352.5 L552.9,352.7 L553.7,352.9 L554.5,353.1 L555.3,353.3 L556.2,353.5 L557.0,353.7 L557.8,353.9 L558.6,354.1 L559.4,354.3 L560.2,354.5 L561.1,354.7 L561.9,354.9 L562.7,355.1 L563.5,355.3 L564.3,355.5 L565.1,355.8 L566.0,356.0 L566.8,356.2 L567.6,356.5 L568.4,356.7 L569.2,356.9 L570.0,357.2 L570.8,357.4 L571.7,357.7 L572.5,358.0 L573.3,358.2 L574.1,358.5 L574.9,358.8 L575.7,359.0 L576.6,359.3 L577.4,359.6 L578.2,359.9 L579.0,360.2 L579.8,360.5 L580.6,360.8 L581.5,361.1 L582.3,361.4 L583.1,361.8 L583.9,362.1 L584.7,362.4 L585.5,362.8 L586.4,363.1 L587.2,363.5 L588.0,363.8 L588.8,364.2 L589.6,364.6 L590.4,365.0 L591.2,365.3 L592.1,365.7 L592.9,366.1 L593.7,366.6 L594.5,367.0 L595.3,367.4 L596.1,367.9 L597.0,368.3 L597.8,368.8 L598.6,369.2 L599.4,369.7 L600.2,370.2 L601.0,370.7 L601.9,371.2 L602.7,371.7 L603.5,372.3 L604.3,372.8 L605.1,373.4 L605.9,374.0 L606.7,374.6 L607.6,375.2 L608.4,375.8 L609.2,376.4 L610.0,377.1 L610.8,377.7 L611.6,378.4 L612.5,379.1 L613.3,379.9 L614.1,380.6 L614.9,381.4 L615.7,382.2 L616.5,383.0 L617.4,383.8 L618.2,384.7 L619.0,385.5 L619.8,386.4 L620.6,387.4 L621.4,388.3 L622.2,389.3 L623.1,390.4 L623.9,391.4 L624.7,392.5 L625.5,393.7 L626.3,394.8 L627.1,396.1 L628.0,397.3 L628.8,398.6 L629.6,400.0 L630.4,401.4 L631.2,402.8 L632.0,404.4 L632.9,405.9 L633.7,407.6 L634.5,409.3 L635.3,411.1 L636.1,412.9 L636.9,414.9 L637.8,416.9 L638.6,419.0 L639.4,421.2 L640.2,423.6 L641.0,426.0 L641.8,428.6 L642.6,431.3 L643.5,434.2 L644.3,437.2 L645.1,440.4 L645.9,443.8 L646.7,447.3 L647.5,451.1 L648.4,455.2 L649.2,459.5 L650.0,464.1 L650.8,469.1 L651.6,474.4 L652.4,480.1 L653.3,486.3 L654.1,493.0 L654.9,500.3 L655.7,508.2 L656.5,516.9 L657.3,526.5 L658.1,537.1 L659.0,548.8 L659.8,562.0 L660.6,576.7 L661.4,593.5 L662.2,612.6 L663.0,634.7 L663.9,660.5 L664.7,690.9 L665.5,727.5 L666.3,772.1 L667.1,827.9 L667.9,899.7 L668.8,995.4 L669.6,1129.3 L670.4,1330.3 L671.2,1665.2 L672.0,2335.0 L672.8,4344.5M674.5,-3693.4 L675.3,-1683.9 L676.1,-1014.1 L676.9,-679.2 L677.7,-478.2 L678.5,-344.3 L679.4,-248.6 L680.2,-176.8 L681.0,-121.0 L681.8,-76.3 L682.6,-39.8 L683.4,-9.4 L684.3,16.4 L685.1,38.5 L685.9,57.6 L686.7,74.4 L687.5,89.1 L688.3,102.3 L689.2,114.0 L690.0,124.6 L690.8,134.2 L691.6,142.9 L692.4,150.8 L693.2,158.1 L694.0,164.8 L694.9,171.0 L695.7,176.7 L696.5,182.0 L697.3,187.0 L698.1,191.6 L698.9,195.9 L699.8,200.0 L700.6,203.8 L701.4,207.3 L702.2,210.7 L703.0,213.9 L703.8,216.9 L704.7,219.8 L705.5,222.5 L706.3,225.1 L707.1,227.5 L707.9,229.9 L708.7,232.1 L709.5,234.2 L710.4,236.2 L711.2,238.2 L712.0,240.0 L712.8,241.8 L713.6,243.5 L714.4,245.2 L715.3,246.7 L716.1,248.3 L716.9,249.7 L717.7,251.1 L718.5,252.5 L719.3,253.8 L720.2,255.0 L721.0,256.3 L721.8,257.4 L722.6,258.6 L723.4,259.7 L724.2,260.7 L725.1,261.8 L725.9,262.8 L726.7,263.7 L727.5,264.7 L728.3,265.6 L729.1,266.4 L729.9,267.3 L730.8,268.1 L731.6,268.9 L732.4,269.7 L733.2,270.5 L734.0,271.2 L734.8,272.0 L735.7,272.7 L736.5,273.4 L737.3,274.0 L738.1,274.7 L738.9,275.3 L739.7,275.9 L740.6,276.5 L741.4,277.1 L742.2,277.7 L743.0,278.3 L743.8,278.8 L744.6,279.4 L745.4,279.9 L746.3,280.4 L747.1,280.9 L747.9,281.4 L748.7,281.9 L749.5,282.3 L750.3,282.8 L751.2,283.2 L752.0,283.7 L752.8,284.1 L753.6,284.5 L754.4,285.0 L755.2,285.4 L756.1,285.8 L756.9,286.1 L757.7,286.5 L758.5,286.9 L759.3,287.3 L760.1,287.6 L760.9,288.0 L761.8,288.3 L762.6,288.7 L763.4,289.0 L764.2,289.3 L765.0,289.7 L765.8,290.0 L766.7,290.3 L767.5,290.6 L768.3,290.9 L769.1,291.2 L769.9,291.5 L770.7,291.8 L771.6,292.1 L772.4,292.3 L773.2,292.6 L774.0,292.9 L774.8,293.1 L775.6,293.4 L776.5,293.7 L777.3,293.9 L778.1,294.2 L778.9,294.4 L779.7,294.6 L780.5,294.9 L781.3,295.1 L782.2,295.3 L783.0,295.6 L783.8,295.8 L784.6,296.0 L785.4,296.2 L786.2,296.4 L787.1,296.6 L787.9,296.8 L788.7,297.0 L789.5,297.2 L790.3,297.4 L791.1,297.6 L792.0,297.8 L792.8,298.0 L793.6,298.2 L794.4,298.4 L795.2,298.6 L796.0,298.8 L796.8,298.9 L797.7,299.1 L798.5,299.3 L799.3,299.5 L800.1,299.6 L800.9,299.8 L801.7,300.0 L802.6,300.1 L803.4,300.3 L804.2,300.4 L805.0,300.6 L805.8,300.7 L806.6,300.9 L807.5,301.0 L808.3,301.2 L809.1,301.3 L809.9,301.5 L810.7,301.6 L811.5,301.8 L812.3,301.9 L813.2,302.0 L814.0,302.2 L814.8,302.3 L815.6,302.5 L816.4,302.6 L817.2,302.7 L818.1,302.8 L818.9,303.0 L819.7,303.1 L820.5,303.2 L821.3,303.3 L822.1,303.5 L823.0,303.6 L823.8,303.7 L824.6,303.8 L825.4,303.9 L826.2,304.1 L827.0,304.2 L827.9,304.3 L828.7,304.4 L829.5,304.5 L830.3,304.6 L831.1,304.7 L831.9,304.8 L832.7,304.9 L833.6,305.0 L834.4,305.1 L835.2,305.3 L836.0,305.4 L836.8,305.5 L837.6,305.6 L838.5,305.7 L839.3,305.8 L840.1,305.8 L840.9,305.9 L841.7,306.0 L842.5,306.1 L843.4,306.2 L844.2,306.3 L845.0,306.4 L845.8,306.5 L846.6,306.6 L847.4,306.7 L848.2,306.8 L849.1,306.9 L849.9,306.9 L850.7,307.0 L851.5,307.1 L852.3,307.2 L853.1,307.3 L854.0,307.4 L854.8,307.4 L855.6,307.5 L856.4,307.6 L857.2,307.7 L858.0,307.8 L858.9,307.8 L859.7,307.9 L860.5,308.0 L861.3,308.1 L862.1,308.2 L862.9,308.2 L863.7,308.3 L864.6,308.4 L865.4,308.4 L866.2,308.5 L867.0,308.6 L867.8,308.7 L868.6,308.7 L869.5,308.8 L870.3,308.9 L871.1,308.9 L871.9,309.0 L872.7,309.1 L873.5,309.1 L874.4,309.2 L875.2,309.3 L876.0,309.3 L876.8,309.4 L877.6,309.5 L878.4,309.5 L879.3,309.6 L880.1,309.7 L880.9,309.7 L881.7,309.8 L882.5,309.9 L883.3,309.9 L884.1,310.0 L885.0,310.0 L885.8,310.1 L886.6,310.2 L887.4,310.2 L888.2,310.3 L889.0,310.3 L889.9,310.4 L890.7,310.4 L891.5,310.5 L892.3,310.6 L893.1,310.6 L893.9,310.7 L894.8,310.7 L895.6,310.8 L896.4,310.8 L897.2,310.9 L898.0,310.9 L898.8,311.0 L899.6,311.0 L900.5,311.1 L901.3,311.1 L902.1,311.2 L902.9,311.2 L903.7,311.3 L904.5,311.3 L905.4,311.4 L906.2,311.4 L907.0,311.5 L907.8,311.5 L908.6,311.6 L909.4,311.6 L910.3,311.7 L911.1,311.7 L911.9,311.8 L912.7,311.8 L913.5,311.9 L914.3,311.9 L915.1,312.0 L916.0,312.0 L916.8,312.1 L917.6,312.1 L918.4,312.2 L919.2,312.2 L920.0,312.2 L920.9,312.3 L921.7,312.3 L922.5,312.4 L923.3,312.4 L924.1,312.5 L924.9,312.5 L925.8,312.5 L926.6,312.6 L927.4,312.6 L928.2,312.7 L929.0,312.7 L929.8,312.8 L930.7,312.8 L931.5,312.8 L932.3,312.9 L933.1,312.9 L933.9,313.0 L934.7,313.0 L935.5,313.0 L936.4,313.1 L937.2,313.1 L938.0,313.1 L938.8,313.2 L939.6,313.2 L940.4,313.3 L941.3,313.3 L942.1,313.3 L942.9,313.4 L943.7,313.4 L944.5,313.4 L945.3,313.5 L946.2,313.5 L947.0,313.6 L947.8,313.6 L948.6,313.6 L949.4,313.7 L950.2,313.7 L951.0,313.7 L951.9,313.8 L952.7,313.8 L953.5,313.8 L954.3,313.9 L955.1,313.9 L955.9,313.9 L956.8,314.0 L957.6,314.0 L958.4,314.0 L959.2,314.1 L960.0,314.1 L960.8,314.1 L961.7,314.2 L962.5,314.2 L963.3,314.2 L964.1,314.3 L964.9,314.3 L965.7,314.3 L966.5,314.4 L967.4,314.4 L968.2,314.4 L969.0,314.4 L969.8,314.5 L970.6,314.5 L971.4,314.5 L972.3,314.6 L973.1,314.6 L973.9,314.6 L974.7,314.7 L975.5,314.7 L976.3,314.7 L977.2,314.7 L978.0,314.8 L978.8,314.8 L979.6,314.8 L980.4,314.9 L981.2,314.9 L982.1,314.9 L982.9,314.9 L983.7,315.0 L984.5,315.0 L985.3,315.0 L986.1,315.1 L986.9,315.1 L987.8,315.1 L988.6,315.1 L989.4,315.2 L990.2,315.2 L991.0,315.2 L991.8,315.2 L992.7,315.3 L993.5,315.3 L994.3,315.3 L995.1,315.3 L995.9,315.4 L996.7,315.4 L997.6,315.4 L998.4,315.5 L999.2,315.5 L1000.0,315.5" stroke="#4646ff"/>
</g>
<path d="M347.30,124.60h8.5 M1000.00,124.60h-8.5 M347.30,174.84h8.5 M1000.00,174.84h-8.5 M347.30,225.07h8.5 M1000.00,225.07h-8.5 M347.30,275.31h8.5 M1000.00,275.31h-8.5 M347.30,325.55h8.5 M1000.00,325.55h-8.5 M347.30,375.79h8.5 M1000.00,375.79h-8.5 M347.30,426.02h8.5 M1000.00,426.02h-8.5 M347.30,476.26h8.5 M1000.00,476.26h-8.5 M347.30,526.50h8.5 M1000.00,526.50h-8.5 M347.30,526.50v-8.5 M347.30,124.60v8.5 M510.48,526.50v-8.5 M510.48,124.60v8.5 M673.65,526.50v-8.5 M673.65,124.60v8.5 M836.83,526.50v-8.5 M836.83,124.60v8.5 M1000.00,526.50v-8.5 M1000.00,124.60v8.5 " stroke="#1c1c1c" stroke-width="1.3" fill="none"/>
<rect x="347.30" y="124.60" width="652.70" height="401.90" stroke="#1c1c1c" stroke-width="1.3" fill="none"/>
<g font-family="Liberation Sans" font-size="16" fill="#262626">
<text x="338.3" y="130.40" text-anchor="end" letter-spacing="0.4">2</text>
<text x="338.3" y="180.64" text-anchor="end" letter-spacing="0.4">1.5</text>
<text x="338.3" y="230.88" text-anchor="end" letter-spacing="0.4">1</text>
<text x="338.3" y="281.11" text-anchor="end" letter-spacing="0.4">0.5</text>
<text x="338.3" y="331.35" text-anchor="end" letter-spacing="0.4">0</text>
<text x="338.3" y="381.59" text-anchor="end" letter-spacing="0.4">-0.5</text>
<text x="338.3" y="431.82" text-anchor="end" letter-spacing="0.4">-1</text>
<text x="338.3" y="482.06" text-anchor="end" letter-spacing="0.4">-1.5</text>
<text x="338.3" y="532.30" text-anchor="end" letter-spacing="0.4">-2</text>
<text x="347.40" y="553.2" text-anchor="middle" letter-spacing="0.3">-10</text>
<text x="510.80" y="553.2" text-anchor="middle" letter-spacing="0.3">-5</text>
<text x="675.50" y="553.2" text-anchor="middle" letter-spacing="0.3">0</text>
<text x="839.00" y="553.2" text-anchor="middle" letter-spacing="0.3">5</text>
<text x="1002.30" y="553.2" text-anchor="middle" letter-spacing="0.3">10</text>
<text x="590.5" y="100" letter-spacing="0.5">Some Math Functions</text>
<text x="925.6" y="147.90" text-anchor="end" letter-spacing="1.1">(x/4)**2</text>
<line x1="934.2" y1="142.30" x2="981.4" y2="142.30" stroke="#ff4048" stroke-width="1.5"/>
<text x="925.6" y="167.90" text-anchor="end" letter-spacing="1.1">sin(x)</text>
<line x1="934.2" y1="162.30" x2="981.4" y2="162.30" stroke="#34fa44" stroke-width="1.5"/>
<text x="925.6" y="187.90" text-anchor="end" letter-spacing="1.1">1/x</text>
<line x1="934.2" y1="182.30" x2="981.4" y2="182.30" stroke="#4646ff" stroke-width="1.5"/>
</g></svg>
</body></html>
